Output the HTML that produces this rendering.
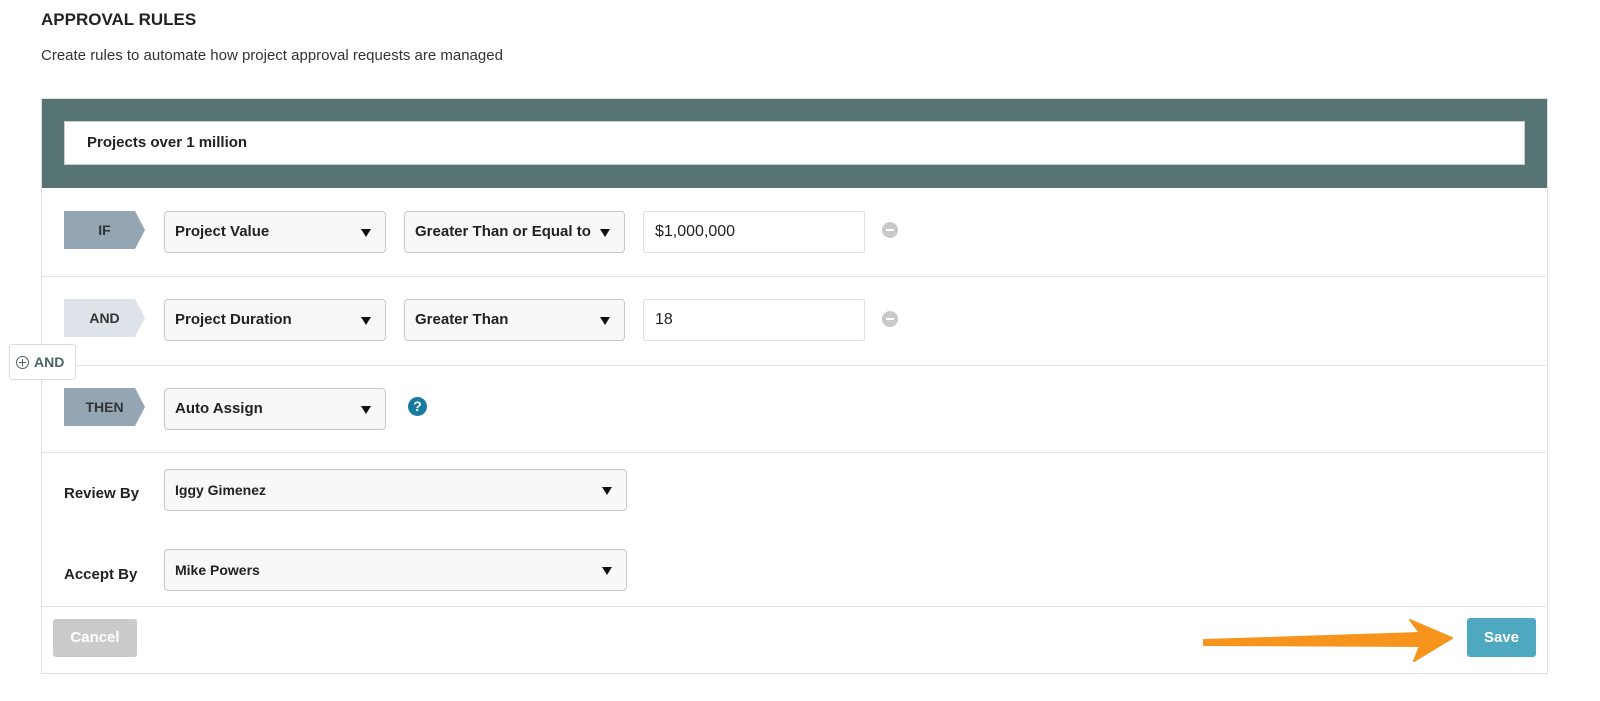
<!DOCTYPE html>
<html><head><style>
*{box-sizing:border-box;margin:0;padding:0}
body{width:1600px;height:701px;background:#fff;font-family:"Liberation Sans",sans-serif;color:#222;position:relative;overflow:hidden}
.a{position:absolute}
.sel{position:absolute;height:42px;border:1px solid #c8c8c8;border-radius:4px;background:#f8f8f8;font-size:15px;font-weight:bold;color:#222;padding:0 10px;line-height:40px}
.sel:after{content:"";position:absolute;right:14px;top:17px;border-left:5px solid transparent;border-right:5px solid transparent;border-top:8px solid #111}
.inp{position:absolute;height:42px;border:1px solid #e0e0e0;border-radius:3px;background:#fff;font-size:16px;padding:0 11px;line-height:40px;width:222px;left:643px}
.tag{position:absolute;left:64px;width:81px;height:38px;font-size:14px;font-weight:bold;color:#333;line-height:38px;padding-left:0;text-align:center;clip-path:polygon(0 0,71px 0,81px 50%,71px 100%,0 100%)}
.tag span{display:inline-block;width:71px}
.dark{background:#94a5b4}.lite{background:#dde3e8}
.minus{position:absolute;left:882px;width:16px;height:16px;border-radius:50%;background:#c9c9c9}
.minus:after{content:"";position:absolute;left:4px;top:7px;width:8px;height:2px;background:#fff}
.hr{position:absolute;left:42px;width:1504px;height:1px;background:#e3e3e3}
.lbl{position:absolute;left:64px;font-size:15px;font-weight:bold}
</style></head><body>
<div class="a" style="left:41px;top:10px;font-size:17px;font-weight:bold;color:#222">APPROVAL RULES</div>
<div class="a" style="left:41px;top:47px;font-size:15px;color:#333">Create rules to automate how project approval requests are managed</div>
<div class="a" style="left:41px;top:98px;width:1507px;height:576px;border:1px solid #e0e0e0"></div>
<div class="a" style="left:42px;top:99px;width:1505px;height:89px;background:#577474"></div>
<div class="a" style="left:64px;top:121px;width:1461px;height:44px;background:#fff;border:1px solid #ccc;font-size:15px;font-weight:bold;padding-left:22px;line-height:42px">Projects over 1 million</div>

<div class="tag dark" style="top:211px"><span>IF</span></div>
<div class="sel" style="left:164px;top:211px;width:222px">Project Value</div>
<div class="sel" style="left:404px;top:211px;width:221px">Greater Than or Equal to</div>
<div class="inp" style="top:211px">$1,000,000</div>
<div class="minus" style="top:222px"></div>
<div class="hr" style="top:276px"></div>

<div class="tag lite" style="top:299px"><span>AND</span></div>
<div class="sel" style="left:164px;top:299px;width:222px">Project Duration</div>
<div class="sel" style="left:404px;top:299px;width:221px">Greater Than</div>
<div class="inp" style="top:299px">18</div>
<div class="minus" style="top:311px"></div>
<div class="hr" style="top:365px"></div>

<div class="a" style="left:9px;top:344px;width:67px;height:36px;background:#fff;border:1px solid #ddd;border-radius:3px;font-size:14px;font-weight:bold;color:#4a6464;line-height:34px;padding-left:6px"><span style="display:inline-block;width:13px;height:13px;border:1.3px solid #4a6464;border-radius:50%;position:relative;vertical-align:-2px;margin-right:5px"><span style="position:absolute;left:2px;top:5px;width:7px;height:1.3px;background:#4a6464"></span><span style="position:absolute;left:5px;top:2px;width:1.3px;height:7px;background:#4a6464"></span></span>AND</div>

<div class="tag dark" style="top:388px"><span>THEN</span></div>
<div class="sel" style="left:164px;top:388px;width:222px">Auto Assign</div>
<div class="a" style="left:408px;top:397px;width:19px;height:19px;border-radius:50%;background:#1a7ba0;color:#fff;font-size:14px;font-weight:bold;text-align:center;line-height:19px">?</div>
<div class="hr" style="top:452px"></div>

<div class="lbl" style="top:485px">Review By</div>
<div class="sel" style="left:164px;top:469px;width:463px;font-size:14px">Iggy Gimenez</div>
<div class="lbl" style="top:566px">Accept By</div>
<div class="sel" style="left:164px;top:549px;width:463px;font-size:14px">Mike Powers</div>
<div class="hr" style="top:606px"></div>

<div class="a" style="left:53px;top:619px;width:84px;height:38px;background:#cbcbcb;border-radius:3px;color:#fff;font-size:15px;font-weight:bold;text-align:center;line-height:38px">Cancel</div>
<div class="a" style="left:1467px;top:618px;width:69px;height:39px;background:#4ea8c0;border-radius:3px;color:#fff;font-size:15px;font-weight:bold;text-align:center;line-height:39px">Save</div>
<svg class="a" style="left:0;top:0" width="1600" height="701"><path d="M1204 640 L1420 633 L1410 620 L1452 638 L1414 661 L1420 646 L1204 645 Z" fill="#f7941d" stroke="#f7941d" stroke-linejoin="round" stroke-width="2"/></svg>
</body></html>
